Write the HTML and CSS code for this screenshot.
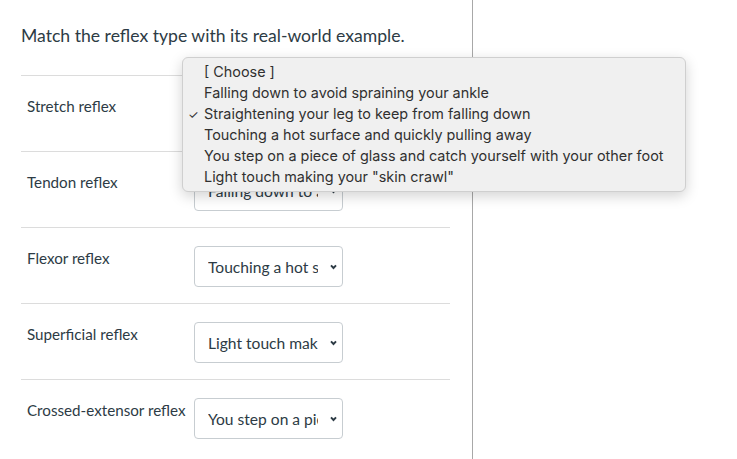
FILE: index.html
```html
<!DOCTYPE html>
<html>
<head>
    <title>Matching question</title>
    <link rel="stylesheet" href="styles.css">
</head>
<body>
    <div class="question">
        <p class="question-text">Match the reflex type with its real-world example.</p>

        <div class="answers">
            <div class="answer-row">
                <div class="answer-label">Stretch reflex</div>
                <div class="fake-select">
                    <span class="select-value">Straightening you</span>
                    <svg class="chevron" width="8" height="6" viewBox="0 0 8 6"><path d="M2 1.3 L4.5 4 L7 1.3" fill="none" stroke="#2d3b45" stroke-width="1.9"/></svg>
                </div>
            </div>
            <div class="answer-row">
                <div class="answer-label">Tendon reflex</div>
                <div class="fake-select">
                    <span class="select-value">Falling down to a</span>
                    <svg class="chevron" width="8" height="6" viewBox="0 0 8 6"><path d="M2 1.3 L4.5 4 L7 1.3" fill="none" stroke="#2d3b45" stroke-width="1.9"/></svg>
                </div>
            </div>
            <div class="answer-row">
                <div class="answer-label">Flexor reflex</div>
                <div class="fake-select">
                    <span class="select-value">Touching a hot surface</span>
                    <svg class="chevron" width="8" height="6" viewBox="0 0 8 6"><path d="M2 1.3 L4.5 4 L7 1.3" fill="none" stroke="#2d3b45" stroke-width="1.9"/></svg>
                </div>
            </div>
            <div class="answer-row">
                <div class="answer-label">Superficial reflex</div>
                <div class="fake-select">
                    <span class="select-value">Light touch making</span>
                    <svg class="chevron" width="8" height="6" viewBox="0 0 8 6"><path d="M2 1.3 L4.5 4 L7 1.3" fill="none" stroke="#2d3b45" stroke-width="1.9"/></svg>
                </div>
            </div>
            <div class="answer-row">
                <div class="answer-label">Crossed-extensor reflex</div>
                <div class="fake-select">
                    <span class="select-value">You step on a piece</span>
                    <svg class="chevron" width="8" height="6" viewBox="0 0 8 6"><path d="M2 1.3 L4.5 4 L7 1.3" fill="none" stroke="#2d3b45" stroke-width="1.9"/></svg>
                </div>
            </div>
        </div>
    </div>

    <!-- open native menu of the first select -->
    <ul class="select-menu">
        <li>[ Choose ]</li>
        <li>Falling down to avoid spraining your ankle</li>
        <li class="checked"><span class="check">✓</span>Straightening your leg to keep from falling down</li>
        <li>Touching a hot surface and quickly pulling away</li>
        <li>You step on a piece of glass and catch yourself with your other foot</li>
        <li>Light touch making your "skin crawl"</li>
    </ul>
</body>
</html>
```

FILE: styles.css
```css
body {
    margin: 0;
    font-family: Lato, "Liberation Sans", sans-serif;
    color: #2d3b45;
    background: #fff;
}
.question {
    width: 451px;
    min-height: 459px;
    padding-left: 21px;
    border-right: 1px solid #a8a8a8;
    box-sizing: content-box;
}
.question-text {
    margin: 0;
    padding-top: 24px;
    font-size: 17.6px;
    line-height: 24px;
    height: 51px;
}
.answers {
    width: 429px;
}
.answer-row {
    display: flex;
    align-items: flex-start;
    height: 76px;
    box-sizing: border-box;
    padding-top: 18px;
    border-top: 1px solid #dcdcdc;
}
.answer-label {
    width: 167px;
    padding-left: 6px;
    margin-top: 2px;
    font-size: 15.2px;
    line-height: 20px;
}
.fake-select {
    display: flex;
    align-items: center;
    width: 149px;
    height: 41px;
    box-sizing: border-box;
    padding: 0 5px 0 13px;
    border: 1px solid #c7cdd1;
    border-radius: 4px;
    background: #fff;
}
.select-value {
    width: 110px;
    overflow: hidden;
    white-space: nowrap;
    font-size: 15.6px;
    line-height: 20px;
}
.chevron {
    margin-left: auto;
}
.select-menu {
    position: absolute;
    left: 182px;
    top: 57px;
    width: 504px;
    height: 135px;
    box-sizing: border-box;
    margin: 0;
    padding: 4px 0 0 21px;
    list-style: none;
    background: #f0f0f0;
    border: 1px solid #cfcfcf;
    border-radius: 6px;
    box-shadow: 0 4px 14px rgba(0, 0, 0, 0.18);
    font-family: Inter, "Noto Sans", sans-serif;
    font-size: 14.4px;
    line-height: 20.8px;
    color: #303030;
}
.select-menu li {
    white-space: nowrap;
}
.checked {
    margin-left: -16px;
}
.check {
    display: inline-block;
    width: 16px;
    font-size: 12px;
}
```
